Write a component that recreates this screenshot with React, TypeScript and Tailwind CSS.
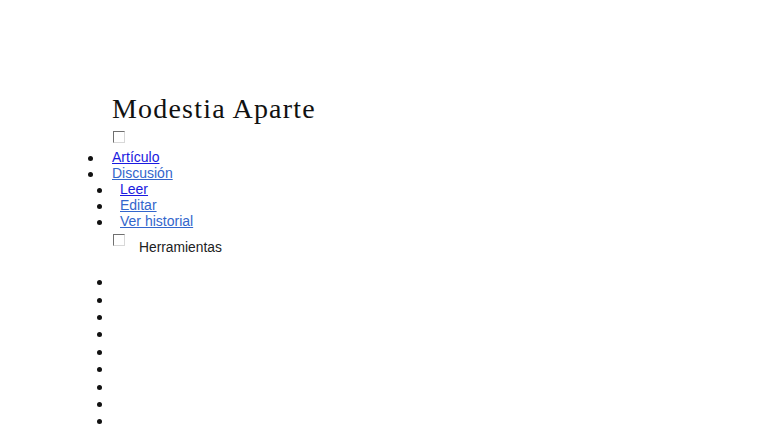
import React from "react";

const Bullet = ({ className = "" }: { className?: string }) => (
  <span className={`block w-[5px] h-[5px] rounded-full bg-[#111] shrink-0 ${className}`} />
);

const Box = ({ className = "" }: { className?: string }) => (
  <span
    className={`block w-[12px] h-[12px] bg-white border border-t-[#707070] border-l-[#707070] border-r-[#d8d8d8] border-b-[#d8d8d8] ${className}`}
  />
);

export default function App() {
  const views = [
    { label: "Leer", color: "text-[#1a1ae0]" },
    { label: "Editar", color: "text-[#3366cc]" },
    { label: "Ver historial", color: "text-[#3366cc]" },
  ];

  return (
    <div className="min-h-[441px] w-full bg-white text-[14px] text-[#202122] font-['Liberation_Sans',Arial,sans-serif]">
      <div className="pt-[93px]">
        <h1 className="pl-[112px] text-[28px] leading-[32px] tracking-[1.2px] text-[#111] font-normal font-['Liberation_Serif','Times_New_Roman',serif]">
          Modestia Aparte
        </h1>
        <div className="pl-[113px] mt-[6px]">
          <Box />
        </div>

        <ul className="mt-[6px]">
          <li className="flex h-[16px] leading-[16px] pl-[88px]">
            <Bullet className="mt-[7px]" />
            <a href="#" className="ml-[19px] underline text-[#1a1ae0]">
              Artículo
            </a>
          </li>
          <li className="flex h-[16px] leading-[16px] pl-[88px]">
            <Bullet className="mt-[7px]" />
            <a href="#" className="ml-[19px] underline text-[#3366cc]">
              Discusión
            </a>
          </li>
        </ul>

        <ul>
          {views.map((v) => (
            <li key={v.label} className="flex h-[16px] leading-[16px] pl-[97px]">
              <Bullet className="mt-[7px]" />
              <a href="#" className={`ml-[18px] underline ${v.color}`}>
                {v.label}
              </a>
            </li>
          ))}
        </ul>

        <div className="flex items-start pl-[113px] mt-[5px]">
          <Box />
          <span className="ml-[14px] mt-[6px] leading-[16px] text-[13.8px]">Herramientas</span>
        </div>

        <ul className="mt-[18px]">
          {Array.from({ length: 9 }).map((_, i) => (
            <li key={i} className="flex items-center h-[17.4px] pl-[97px]">
              <Bullet />
            </li>
          ))}
        </ul>
      </div>
    </div>
  );
}
